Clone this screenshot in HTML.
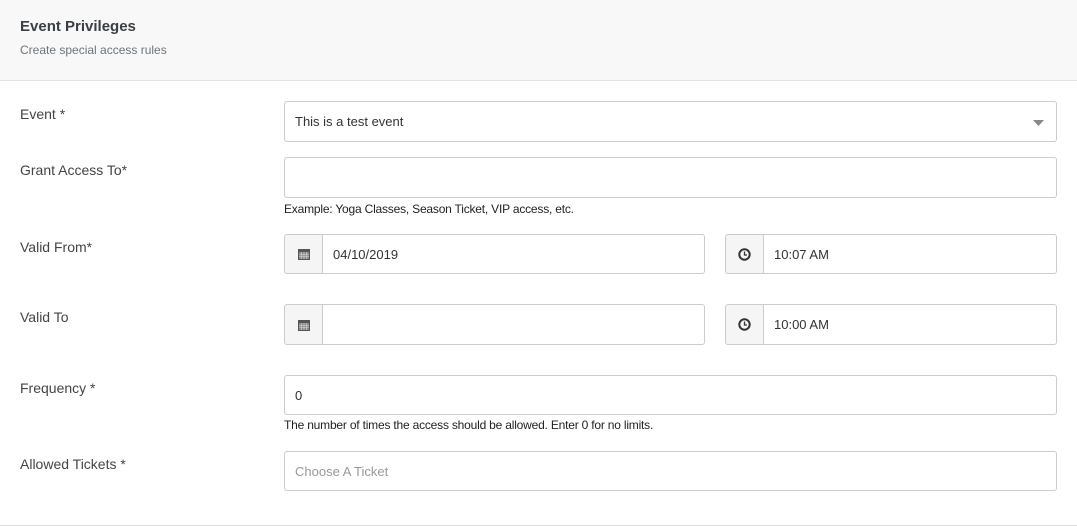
<!DOCTYPE html>
<html><head><style>
*{box-sizing:border-box;margin:0;padding:0}
body{width:1077px;height:527px;background:#fff;font-family:"Liberation Sans",sans-serif;position:relative;overflow:hidden;color:#333}
.hdr{position:absolute;left:0;top:0;width:1077px;height:81px;background:#f8f8f8;border-bottom:1px solid #e3e3e3}
.t{position:absolute;left:20px;top:18px;font-size:15px;font-weight:bold;color:#3a3f44}
.s{position:absolute;left:20px;top:43px;font-size:12px;color:#6c757d}
.l{position:absolute;left:20px;font-size:14px;color:#444}
.in{position:absolute;border:1px solid #ccc;border-radius:3px;background:#fff;font-size:13px;color:#333;padding-left:10px;display:flex;align-items:center}
.ad{position:absolute;border:1px solid #ccc;border-radius:3px 0 0 3px;background:#f5f5f5;display:flex;align-items:center;justify-content:center}
.h{position:absolute;left:284px;font-size:12px;color:#222;letter-spacing:-0.2px}
.bl{position:absolute;left:0;top:525px;width:1077px;height:1px;background:#ddd}
</style></head><body>
<div class="hdr"><div class="t">Event Privileges</div><div class="s">Create special access rules</div></div>

<div class="l" style="top:106px">Event *</div>
<div class="in" style="left:284px;top:101px;width:773px;height:41px">This is a test event
<svg style="position:absolute;right:12px;top:18px" width="11" height="6"><path d="M0 0H11L5.5 6Z" fill="#888"/></svg></div>

<div class="l" style="top:162px">Grant Access To*</div>
<div class="in" style="left:284px;top:157px;width:773px;height:41px"></div>
<div class="h" style="top:202px">Example: Yoga Classes, Season Ticket, VIP access, etc.</div>

<div class="l" style="top:239px">Valid From*</div>
<div class="ad" style="left:284px;top:234px;width:39px;height:40px"><svg width="12" height="12"><rect x="0" y="1" width="12" height="11" fill="#555"/><rect x="1" y="4" width="10" height="7" fill="#888"/><path d="M1 6.5H11M1 8.5H11M3.5 4V11M6 4V11M8.5 4V11" stroke="#ddd" stroke-width=".6"/></svg></div>
<div class="in" style="left:322px;top:234px;width:383px;height:40px;border-radius:0 3px 3px 0">04/10/2019</div>
<div class="ad" style="left:725px;top:234px;width:39px;height:40px"><svg width="13" height="13"><circle cx="6.5" cy="6.5" r="5.2" fill="none" stroke="#333" stroke-width="2"/><path d="M6.5 3.5V7H9" fill="none" stroke="#333" stroke-width="1.3"/></svg></div>
<div class="in" style="left:763px;top:234px;width:294px;height:40px;border-radius:0 3px 3px 0">10:07 AM</div>

<div class="l" style="top:309px">Valid To</div>
<div class="ad" style="left:284px;top:304px;width:39px;height:41px"><svg width="12" height="12"><rect x="0" y="1" width="12" height="11" fill="#555"/><rect x="1" y="4" width="10" height="7" fill="#888"/><path d="M1 6.5H11M1 8.5H11M3.5 4V11M6 4V11M8.5 4V11" stroke="#ddd" stroke-width=".6"/></svg></div>
<div class="in" style="left:322px;top:304px;width:383px;height:41px;border-radius:0 3px 3px 0"></div>
<div class="ad" style="left:725px;top:304px;width:39px;height:41px"><svg width="13" height="13"><circle cx="6.5" cy="6.5" r="5.2" fill="none" stroke="#333" stroke-width="2"/><path d="M6.5 3.5V7H9" fill="none" stroke="#333" stroke-width="1.3"/></svg></div>
<div class="in" style="left:763px;top:304px;width:294px;height:41px;border-radius:0 3px 3px 0">10:00 AM</div>

<div class="l" style="top:380px">Frequency *</div>
<div class="in" style="left:284px;top:375px;width:773px;height:40px">0</div>
<div class="h" style="top:418px">The number of times the access should be allowed. Enter 0 for no limits.</div>

<div class="l" style="top:456px">Allowed Tickets *</div>
<div class="in" style="left:284px;top:451px;width:773px;height:40px;color:#999">Choose A Ticket</div>
<div class="bl"></div>
</body></html>
